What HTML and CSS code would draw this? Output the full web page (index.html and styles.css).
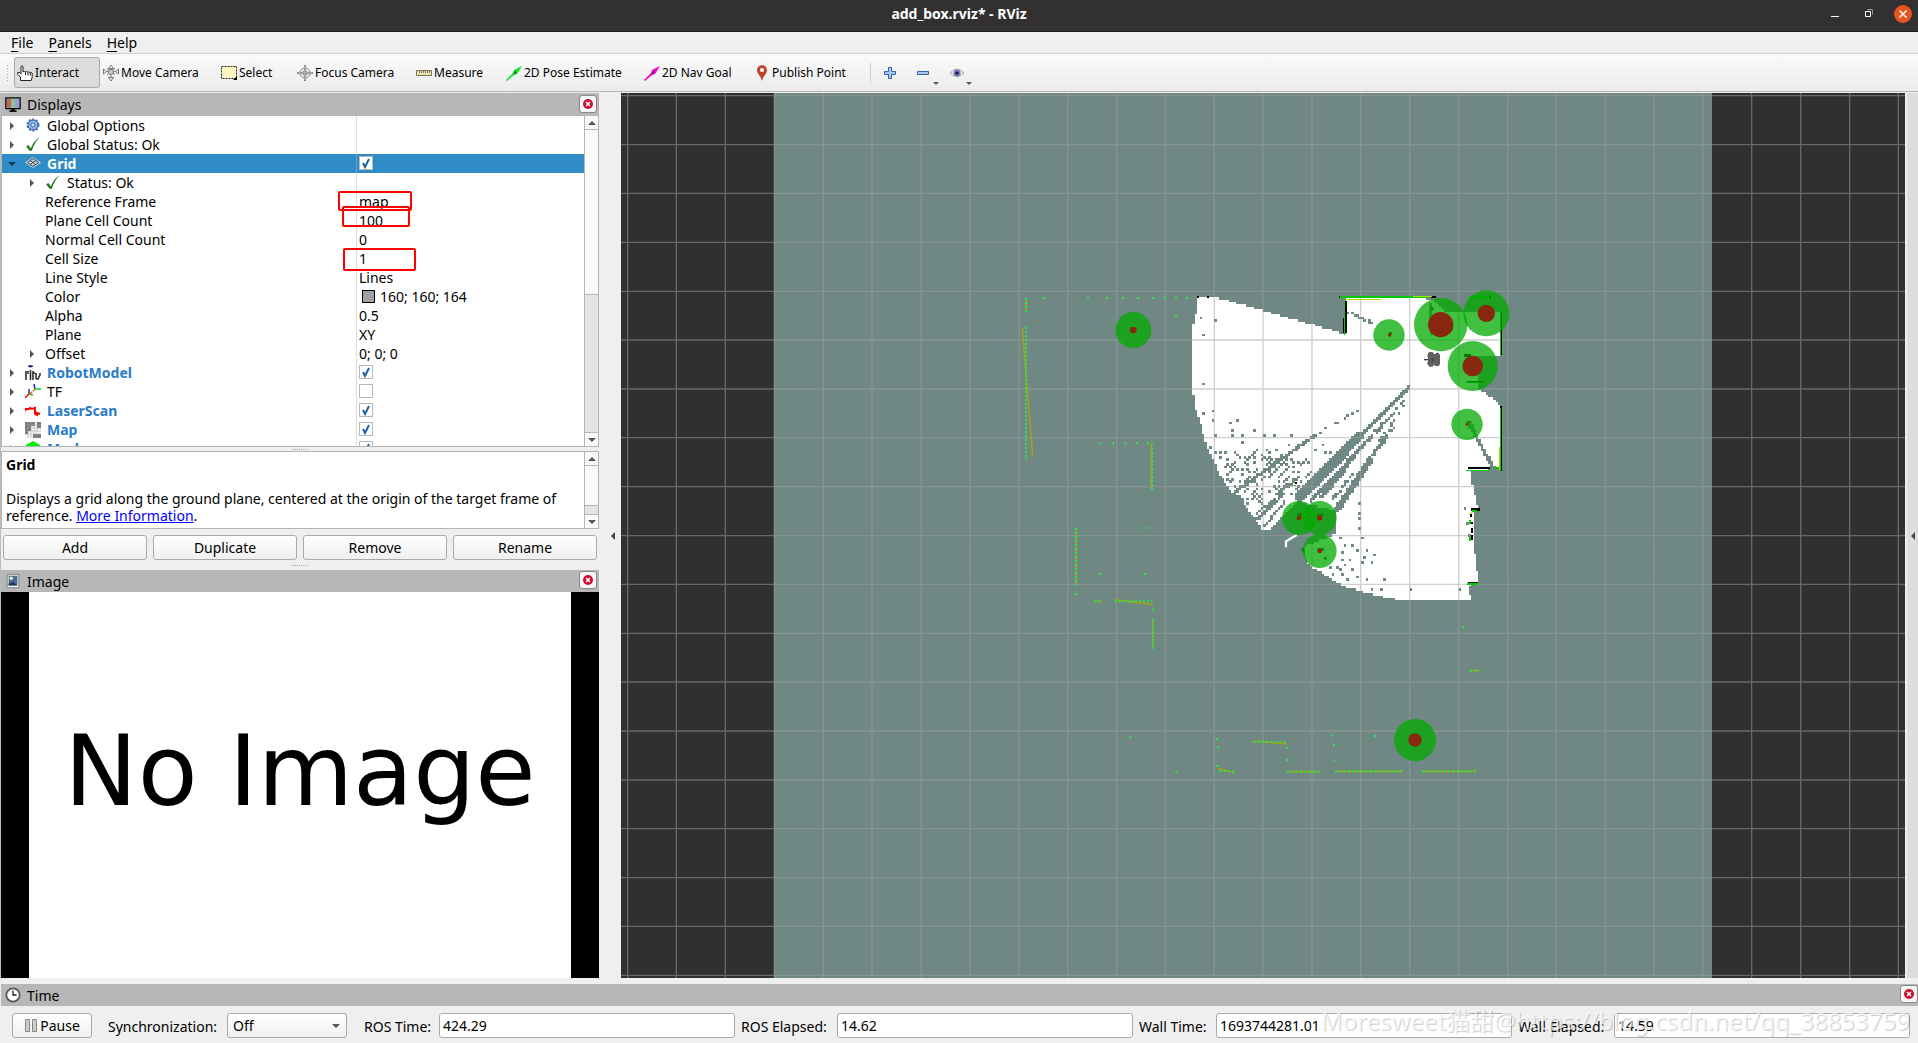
FILE: index.html
```
<!DOCTYPE html>
<html lang="en">
  <head>
    <meta charset="UTF-8" />
    <meta name="viewport" content="width=device-width, initial-scale=1.0" />
    <title>add_box.rviz* - RViz</title>
    <link rel="stylesheet" href="styles.css">
  </head>
  <body>
    <!-- Shared icons -->
    <svg class="defs" width="0" height="0">
      <symbol id="check" viewBox="0 0 14 14">
        <path d="M1 8 L3 7 L5 10 Q8 3 13 0 Q8 5 6 12 L4 12 Z" fill="#1e7a1e" />
      </symbol>
      <symbol id="close" viewBox="0 0 16 16">
        <circle cx="8" cy="8" r="5" fill="#c8102e" />
        <path d="M6 6l4 4M10 6l-4 4" stroke="#fff" stroke-width="1.5" />
      </symbol>
      <symbol id="arrow" viewBox="0 0 16 16">
        <path d="M0 15L7 8l1-3L16 1l-5 8-3 1-7 6z" fill="currentColor" />
        <path d="M9 5l-2 5 4-2z" fill="#333" opacity=".6" />
      </symbol>
    </svg>

    <!-- Title bar -->
    <header class="titlebar">
      <h1>add_box.rviz* - RViz</h1>
      <div class="window-buttons">
        <button aria-label="Minimize"><svg width="18" height="18"><path d="M5 11.500h8" stroke="#fff" /></svg></button>
        <button aria-label="Restore"><svg width="18" height="18" fill="none"><path d="M5.500 6.500h5v5h-5z" stroke="#fff" /><path d="M7.500 4.500h5v5" stroke="#999" /></svg></button>
        <button aria-label="Close" class="quit"><svg width="18" height="18"><path d="M5.500 5.500l7 7M12.500 5.500l-7 7" stroke="#fff" stroke-width="1.500" /></svg></button>
      </div>
    </header>

    <!-- Menu -->
    <nav class="menu">
      <a href="#"><u>F</u>ile</a>
      <a href="#"><u>P</u>anels</a>
      <a href="#"><u>H</u>elp</a>
    </nav>

    <!-- Toolbar -->
    <div class="toolbar">
      <span class="grip"></span>
      <button class="tool interact selected">
        <svg width="16" height="16" viewBox="0 0 16 16"><path d="M3.500 15.500V12L.7 9.500V7.500h2L4 9V1.500q1-1.500 2 0V7q1-1.500 2.500 0 1-1.200 2.500.3 1-1 2.200.3 1-.8 2 .5V11q0 2-1 4.500z" fill="#fff" stroke="#222" /><path d="M8.500 7v3M11 7.500v3M13.300 8v2.500" stroke="#222" /></svg>Interact
      </button>
      <button class="tool move">
        <svg width="16" height="16" viewBox="0 0 16 16" fill="none" stroke="#777"><path d="M8 0L5.500 3.500h5zM8 16l-2.500-3.500h5zM.5 4v5l3-2.500zM15.500 4v5l-3-2.500zM3 6.500h10M8 3v10M4 9.500l8-6M4 3.500l8 6" /><circle cx="8" cy="7" r="2.500" fill="#ccc" /></svg>Move Camera
      </button>
      <button class="tool select">
        <svg width="16" height="16" viewBox="0 0 16 16"><path d="M.5 1.500h15v12H.5z" fill="#fdf6c0" stroke="#222" stroke-dasharray="2 1" /><path d="M16 11v4h-4z" fill="#000" /></svg>Select
      </button>
      <button class="tool focus">
        <svg width="16" height="16" viewBox="0 0 16 16" fill="none" stroke="#888"><circle cx="8" cy="8" r="5" /><circle cx="8" cy="8" r="2.500" /><path d="M8 0v16M0 8h16" stroke-width="2" /><path d="M8 1v14M1 8h14" stroke="#ddd" stroke-width=".6" /></svg>Focus Camera
      </button>
      <button class="tool measure">
        <svg width="16" height="16" viewBox="0 0 16 16"><path d="M.5 5.500h15v5H.5z" fill="#e9dfa5" stroke="#77705a" /><path d="M3.500 6v2M5.500 6v2M7.500 6v2M9.500 6v2M11.500 6v2M13.500 6v2" stroke="#665" stroke-width=".8" /></svg>Measure
      </button>
      <button class="tool pose"><svg width="16" height="16" color="#0cf02a"><use href="#arrow" /></svg>2D Pose Estimate</button>
      <button class="tool nav"><svg width="16" height="16" color="#f800d0"><use href="#arrow" /></svg>2D Nav Goal</button>
      <button class="tool publish">
        <svg width="16" height="16" viewBox="0 0 16 16"><path d="M8 16Q7 12 4 8.500Q2 5 4 2Q8-2 12 2Q14 5 12 8.500Q9 12 8 16z" fill="#b8452c" /><circle cx="8" cy="5" r="2" fill="#fff" /></svg>Publish Point
      </button>
      <span class="separator"></span>
      <button class="mini" aria-label="Add tool"><svg width="14" height="14"><path d="M5.500 1.500h3v4h4v3h-4v4h-3v-4h-4v-3h4z" fill="#a9c7ea" stroke="#2f65aa" /></svg></button>
      <button class="mini drop" aria-label="Remove tool"><svg width="14" height="14"><path d="M1.500 5.500h11v3h-11z" fill="#a9c7ea" stroke="#2f65aa" /></svg></button>
      <button class="mini drop" aria-label="Tool visibility"><svg width="16" height="14"><path d="M1 7Q8-1 15 7Q8 14 1 7z" fill="#e8e8e8" stroke="#aaa" /><circle cx="8" cy="7" r="3.500" fill="#7078c0" /><circle cx="8" cy="7" r="1.500" fill="#112" /></svg></button>
    </div>

    <main class="workspace">
      <aside class="docks">
        <!-- Displays dock -->
        <section class="displays">
          <div class="dock-title">
            <svg width="16" height="16" viewBox="0 0 18 18"><path d="M1 1h16v12H1z" fill="#8c8" stroke="#000" stroke-width="1.500" /><path d="M2 2h5v10H2z" fill="#b66" /><path d="M11 2h5v10h-5z" fill="#99d" /><path d="M7 13h4v2h2v2H5v-2h2z" fill="#111" /></svg>
            <h2>Displays</h2>
            <button class="dock-close" aria-label="Close Displays"><svg width="16" height="16"><use href="#close" /></svg></button>
          </div>
          <div class="scroll-area tree-area">
            <div class="tree">
              <div class="row"><div class="name closed"><svg width="16" height="16" viewBox="0 0 16 16"><circle cx="8" cy="7" r="5" fill="#8fb4e2" stroke="#3a6bb0" /><circle cx="8" cy="7" r="5.500" fill="none" stroke="#3a6bb0" stroke-width="2" stroke-dasharray="2 1.500" /><circle cx="8" cy="7" r="2" fill="#dce8f6" stroke="#3a6bb0" /></svg>Global Options</div><div class="value"></div></div>
              <div class="row"><div class="name closed"><svg width="16" height="16"><use href="#check" /></svg>Global Status: Ok</div><div class="value"></div></div>
              <div class="row current"><div class="name open"><svg width="16" height="16" viewBox="0 0 16 16"><path d="M8 1l8 5.500L8 12 0 6.500z" fill="#c8d8e2" /><path d="M8 2.500l5.500 4L8 10.500 2.500 6.500zM5.200 4.500l5.500 4M10.700 4.500l-5.500 4" fill="none" stroke="#2d4150" /></svg>Grid</div><div class="value"><input type="checkbox" aria-label="Grid" checked></div></div>
              <div class="row child"><div class="name closed"><svg width="16" height="16"><use href="#check" /></svg>Status: Ok</div><div class="value"></div></div>
              <div class="row leaf"><div class="name">Reference Frame</div><div class="value">map</div></div>
              <div class="row leaf"><div class="name">Plane Cell Count</div><div class="value">100</div></div>
              <div class="row leaf"><div class="name">Normal Cell Count</div><div class="value">0</div></div>
              <div class="row leaf"><div class="name">Cell Size</div><div class="value">1</div></div>
              <div class="row leaf"><div class="name">Line Style</div><div class="value">Lines</div></div>
              <div class="row leaf"><div class="name">Color</div><div class="value"><i class="swatch"></i>160; 160; 164</div></div>
              <div class="row leaf"><div class="name">Alpha</div><div class="value">0.5</div></div>
              <div class="row leaf"><div class="name">Plane</div><div class="value">XY</div></div>
              <div class="row leaf"><div class="name closed">Offset</div><div class="value">0; 0; 0</div></div>
              <div class="row enabled"><div class="name closed"><svg width="16" height="16" viewBox="0 0 16 16"><path d="M3 1q2.500-2 5 0v1H3z" fill="#228" /><path d="M4 2h3v1H4z" fill="#bbb" /><path d="M1 6v9M3 6v3M5.500 5v10M8 6v9M8 8h2M11 8v6M11 14h2l2-4V8" fill="none" stroke="#222" stroke-width="1.500" /></svg>RobotModel</div><div class="value"><input type="checkbox" aria-label="RobotModel" checked></div></div>
              <div class="row"><div class="name closed"><svg width="16" height="16" viewBox="0 0 16 16" fill="none" stroke-width="1.500"><path d="M4 10V5M10 5L9 0" stroke="#22c" /><path d="M4 10l4 1M10 5h6" stroke="#0d0" /><path d="M0 14l4-4" stroke="#e00" /><path d="M5 10l5-5" stroke="#d62" stroke-dasharray="3 1" /></svg>TF</div><div class="value"><input type="checkbox" aria-label="TF"></div></div>
              <div class="row enabled"><div class="name closed"><svg width="16" height="16" viewBox="0 0 16 16"><path d="M0 8l1-2h3l1-1 2 1 3-1v6l2 1v-2l3 1" fill="none" stroke="#f00" stroke-width="2" /></svg>LaserScan</div><div class="value"><input type="checkbox" aria-label="LaserScan" checked></div></div>
              <div class="row enabled"><div class="name closed"><svg width="16" height="16" viewBox="0 0 16 16"><path d="M0 0h16v16H0z" fill="#f4f4f4" /><path d="M0 0h10v4H6v5H0zM12 0h4v6h-4zM8 12h8v4H8zM0 9h3v3H0z" fill="#777" /><path d="M3 0v16M6 0v16M9 0v16M12 0v16M0 3h16M0 6h16M0 9h16M0 12h16" stroke="#aaa" stroke-width=".5" /></svg>Map</div><div class="value"><input type="checkbox" aria-label="Map" checked></div></div>
              <div class="row enabled"><div class="name closed"><svg width="16" height="16" viewBox="0 0 16 16"><path d="M8 0l7 4v8l-7 4-7-4V4z" fill="#0e0" /></svg>Marker</div><div class="value"><input type="checkbox" aria-label="Marker" checked></div></div>
            </div>
            <div class="scrollbar"><b class="up"></b><i class="thumb"></i><b class="down"></b></div>
            <!-- Highlighted values -->
            <span class="mark frame"></span>
            <span class="mark count"></span>
            <span class="mark size"></span>
          </div>
          <div class="handle"></div>
          <div class="scroll-area help-area">
            <div class="help">
              <h3>Grid</h3>
              <p>Displays a grid along the ground plane, centered at the origin of the target frame of reference. <a href="#">More Information</a>.</p>
            </div>
            <div class="scrollbar"><b class="up"></b><i class="thumb"></i><b class="down"></b></div>
          </div>
          <div class="actions">
            <button>Add</button>
            <button>Duplicate</button>
            <button>Remove</button>
            <button>Rename</button>
          </div>
          <div class="handle wide"></div>
        </section>

        <!-- Image dock -->
        <section class="image">
          <div class="dock-title">
            <svg width="16" height="16" viewBox="0 0 18 18"><path d="M2.500 1.500h13v15h-13z" fill="#fff" stroke="#777" /><path d="M4 3h10v11H4z" fill="#4d6c98" /><circle cx="7" cy="6" r="2" fill="#eee8b0" /><path d="M4 12l5-2 5 4H4z" fill="#243850" /></svg>
            <h2>Image</h2>
            <button class="dock-close" aria-label="Close Image"><svg width="16" height="16"><use href="#close" /></svg></button>
          </div>
          <div class="camera"><p>No Image</p></div>
        </section>
      </aside>

      <div class="collapse left"><button aria-label="Hide left docks"></button></div>

      <!-- 3D view -->
      <svg class="view" viewBox="0 0 3852 2655" preserveAspectRatio="xMidYMid slice">
        <path d="M0 0h3852v2655H0z" fill="#303030" />
        <path d="M459 0h2814v2655H459z" fill="#6f8884" />
        <g transform="translate(1677 561)" shape-rendering="crispEdges">
          <path id="free" fill="#fff" />
          <path id="unknown" fill="#6f8884" />
        </g>
        <!-- Grid -->
        <path stroke="#a0a0a4" stroke-opacity=".5" stroke-width="4" d="M20 0v2655M166 0v2655M313 0v2655M460 0v2655M607 0v2655M753 0v2655M900 0v2655M1047 0v2655M1194 0v2655M1340 0v2655M1487 0v2655M1633 0v2655M1780 0v2655M1926 0v2655M2073 0v2655M2219 0v2655M2366 0v2655M2513 0v2655M2660 0v2655M2806 0v2655M2953 0v2655M3099 0v2655M3246 0v2655M3392 0v2655M3539 0v2655M3686 0v2655M3832 0v2655M0 8h3852M0 155h3852M0 301h3852M0 448h3852M0 595h3852M0 741h3852M0 888h3852M0 1034h3852M0 1181h3852M0 1328h3852M0 1474h3852M0 1621h3852M0 1767h3852M0 1914h3852M0 2061h3852M0 2207h3852M0 2354h3852M0 2500h3852M0 2647h3852" />

        <!-- Walls, scan hits and obstacles around the robot -->
        <g transform="translate(1677 561)" fill="none">
          <g shape-rendering="crispEdges">
            <path stroke="#000" stroke-width="7" d="M50 51h8M80 51h8M476 50h292M498 62v98M491 115v45M768 146h50M868 50h66M962 95v130M963 378v196M863 564h68M945 564h18M872 688h28M876 744v14M876 766v14M872 702v8M876 725v6M864 909h30M344 609h7M852 226h20M860 306h52" />
            <path stroke="#6f8884" stroke-width="8" d="M738 56h16M752 70v70" />
            <path stroke="#0c0" stroke-width="4" d="M480 51h260M494 64v20M494 100v64M868 51h60M961 98v126M961 385v188M858 571h72M945 564h18M876 693h16M870 720v12M870 770v12M862 912h32M750 162h10M342 616h6M858 308h56M18 53h6" />
            <path stroke="#ad0" stroke-width="3" d="M494 57h110M700 50h56M957 500v70M868 702l10-6" />
          </g>
          <path stroke="#fff" stroke-width="7" d="M350 765L318 784V802" />
          <g fill="#00aa00" fill-opacity=".75">
            <circle cx="627" cy="165" r="47" /><circle cx="782" cy="134" r="80" />
            <circle cx="919" cy="100" r="69" /><circle cx="878" cy="258" r="75" />
            <circle cx="861" cy="433" r="47" /><circle cx="357" cy="714" r="51" />
            <circle cx="419" cy="714" r="51" /><circle cx="419" cy="813" r="51" />
          </g>
          <path stroke="#087c08" stroke-width="8" stroke-opacity=".8" d="M860 427h14M352 703h14M410 705h20M412 808h20M432 835h8M626 160h10M757 82v10M865 228v40M368 804v10" />
          <g fill="#8a270f">
            <circle cx="629" cy="165" r="5" /><circle cx="782" cy="134" r="38" />
            <circle cx="919" cy="100" r="26" /><circle cx="878" cy="258" r="31" />
            <circle cx="861" cy="433" r="4" /><circle cx="357" cy="714" r="7" />
            <circle cx="419" cy="714" r="8" /><circle cx="419" cy="813" r="7" />
          </g>
          <path fill="#606060" d="M744 220l4-4h10l4 6h4l4-4h6l4 8v26l-4 6h-10l-4-4-4 6h-10l-6-8v-6h2v-14h-2z" />
          <path stroke="#2b3f70" stroke-width="4" d="M732 239h12" />
          <circle cx="758" cy="239" r="5" fill="#444" />
        </g>

        <!-- Scan west of the free space -->
        <g transform="translate(1137 561)" fill="none">
          <path stroke="#a3a01e" stroke-width="5" d="M78 56v38M67 144L98 530M454 490v134M228 746v166M284 964h20M346 959L458 974M459 1020v82" />
          <path stroke="#2be54a" stroke-width="6" stroke-dasharray="6 6" d="M78 54v44M78 140v400M456 492v142M228 744v172M459 1018v88M284 964h24M344 964h114" />
          <path stroke="#2be54a" stroke-width="6" d="M129 54h6M261 54h6M318 54h6M366 54h6M411 54h6M456 54h6M492 54h6M525 54h6M558 54h6M525 108h6M296 490h6M336 490h6M373 490h6M408 489h6M441 490h6M437 744h6M297 882h6M432 882h6M225 942h6M456 989h6" />
          <circle cx="400" cy="150" r="54" fill="#00aa00" fill-opacity=".75" /><circle cx="400" cy="150" r="10" fill="#8a270f" />
        </g>

        <!-- Scan south of the free space -->
        <g transform="translate(1377 1461)" fill="none">
          <path stroke="#a3a01e" stroke-width="5" d="M522 483L621 492M412 565L464 578M621 575h96M766 574h202M1027 574h162M1172 272h24" />
          <path stroke="#2be54a" stroke-width="6" stroke-dasharray="6 7" d="M519 486h100M621 575h98M765 574h204M1026 574h164M1170 272h28M418 574h48" />
          <path stroke="#2be54a" stroke-width="6" d="M148 472h6M408 477h6M411 501h6M409 558h6M286 576h6M618 504h6M618 540h6M754 467h6M759 495h6M759 541h6M882 468h6M1147 141h6" />
          <circle cx="1005" cy="480" r="63" fill="#00aa00" fill-opacity=".75" /><circle cx="1005" cy="480" r="20" fill="#8a270f" />
        </g>
      </svg>

      <div class="collapse right"><button aria-label="Hide right docks"></button></div>
    </main>

    <!-- Time dock -->
    <footer class="time">
      <div class="dock-title">
        <svg width="16" height="16" viewBox="0 0 18 18"><circle cx="9" cy="9" r="7.500" fill="#fff" stroke="#555" stroke-width="2" /><path d="M9 4v5h4" fill="none" stroke="#222" stroke-width="1.500" /></svg>
        <h2>Time</h2>
        <button class="dock-close" aria-label="Close Time"><svg width="16" height="16"><use href="#close" /></svg></button>
      </div>
      <form class="clock">
        <button type="button" class="pause"><svg width="14" height="16"><path d="M1.500 1.500h4v12h-4zM8.500 1.500h4v12h-4z" fill="#ccc" stroke="#888" /></svg>Pause</button>
        <label for="sync" class="sync">Synchronization:</label>
        <select id="sync"><option>Off</option></select>
        <label for="rosTime" class="ros-time">ROS Time:</label>
        <input id="rosTime" type="text" value="424.29">
        <label for="rosElapsed" class="elapsed">ROS Elapsed:</label>
        <input id="rosElapsed" type="text" value="14.62">
        <label for="wallTime" class="wall-time">Wall Time:</label>
        <input id="wallTime" type="text" value="1693744281.01">
        <label for="wallElapsed" class="elapsed">Wall Elapsed:</label>
        <input id="wallElapsed" type="text" value="14.59">
      </form>
      <span class="watermark">Moresweet猫甜@https://blog.csdn.net/qq_38853759</span>
    </footer>

    <script src="map.js"></script>
  </body>
</html>
```
FILE: styles.css
```
/* General */
* {
  box-sizing: border-box;
}

body {
  margin: 0;
  height: 100vh;
  display: flex;
  flex-direction: column;
  overflow: hidden;
  background: #efefef;
  color: #000;
  font-family: "Noto Sans", "Noto Sans CJK SC", sans-serif;
  font-size: 14px;
}

button,
input,
select {
  font: inherit;
  color: inherit;
}

h1,
h2,
h3,
p {
  margin: 0;
  font-size: 14px;
  font-weight: normal;
}

svg {
  flex: none;
}

.defs {
  position: absolute;
}

/* Title bar */
.titlebar {
  display: grid;
  grid-template-columns: 1fr auto 1fr;
  align-items: center;
  height: 32px;
  padding-bottom: 4px;
  background: #323031;
  border-bottom: 1px solid #1c1c1c;
  color: #fff;
}

.titlebar h1 {
  grid-column: 2;
  font-weight: bold;
}

.window-buttons {
  display: flex;
  justify-content: flex-end;
  gap: 16px;
  padding-right: 6px;
}

.window-buttons button {
  width: 18px;
  height: 18px;
  padding: 0;
  border: none;
  border-radius: 50%;
  background: none;
}

.window-buttons .quit {
  background: #e95420;
}

.window-buttons svg {
  display: block;
}

/* Menu */
.menu {
  display: flex;
  gap: 15px;
  height: 22px;
  padding-left: 11px;
  line-height: 22px;
  border-bottom: 1px solid #d0d0d0;
}

.menu a {
  color: #000;
  text-decoration: none;
}

.menu u {
  text-underline-offset: 3px;
}

/* Toolbar */
.toolbar {
  display: flex;
  align-items: center;
  height: 38px;
  padding-left: 6px;
  background: linear-gradient(#fafafa, #ececec);
  border-bottom: 1px solid #b4b4b4;
  font-size: 12px;
}

.grip {
  width: 4px;
  height: 18px;
  margin-right: 4px;
  background: radial-gradient(#aaa 1px, transparent 1px) 0 0 / 3px 3px;
}

.tool {
  display: flex;
  align-items: center;
  gap: 2px;
  height: 31px;
  padding: 0 0 0 2px;
  border: 1px solid transparent;
  border-radius: 3px;
  background: none;
  white-space: nowrap;
}

.tool.selected {
  background: #dcdcdc;
  border-color: #aaa;
}

.interact { width: 86px; }
.move { width: 118px; }
.select { width: 76px; }
.focus { width: 119px; }
.measure { width: 90px; }
.pose { width: 138px; }
.nav { width: 110px; }
.publish { width: 119px; }

.separator {
  width: 1px;
  height: 20px;
  margin-right: 6px;
  background: #ccc;
}

.mini {
  position: relative;
  width: 33px;
  height: 31px;
  padding: 0 0 0 6px;
  border: none;
  background: none;
  text-align: left;
}

.mini svg {
  display: block;
}

.drop::after {
  content: "";
  position: absolute;
  right: 4px;
  bottom: 3px;
  border: 3px solid transparent;
  border-top-color: #555;
  border-bottom: none;
}

/* Docks */
.workspace {
  flex: 1;
  display: flex;
  min-height: 0;
  padding-top: 1px;
}

.docks {
  display: flex;
  flex-direction: column;
  width: 599px;
  padding-left: 1px;
  background: linear-gradient(90deg, #bbb 1px, transparent 1px);
}

.dock-title {
  display: flex;
  align-items: center;
  gap: 6px;
  height: 23px;
  padding: 0 2px 0 4px;
  background: #b7b7b7;
}

.dock-title h2 {
  flex: 1;
}

.dock-close {
  width: 18px;
  height: 18px;
  margin-bottom: 2px;
  padding: 0;
  border: 1px solid #888;
  border-radius: 3px;
  background: #f6f6f6;
}

.dock-close svg {
  display: block;
}

.scroll-area {
  position: relative;
  display: flex;
  background: #fff;
  border: 1px solid #b4b4b4;
}

.tree-area {
  height: 331px;
  border-top: none;
}

.tree {
  flex: 1;
  overflow: hidden;
}

.row {
  display: grid;
  grid-template-columns: 354px 1fr;
  height: 19px;
  line-height: 19px;
}

.name {
  position: relative;
  display: flex;
  align-items: center;
  gap: 6px;
  padding-left: 23px;
}

.child .name,
.leaf .name {
  padding-left: 43px;
}

.value {
  display: flex;
  align-items: center;
  padding-left: 2px;
  border-left: 1px solid #ddd;
}

.closed::before,
.open::before {
  content: "";
  position: absolute;
  left: 8px;
  top: 6px;
  border: 4px solid transparent;
  border-left-color: #555;
  border-right: none;
}

.child .closed::before,
.leaf .closed::before {
  left: 28px;
}

.open::before {
  left: 6px;
  top: 8px;
  border: 4px solid transparent;
  border-top-color: #123a58;
  border-bottom: none;
}

.current {
  background: #308cc6;
  color: #fff;
  font-weight: bold;
}

.current .value {
  border-color: #5aa3d2;
}

.enabled .name {
  color: #2a7bc8;
  font-weight: bold;
}

input[type="checkbox"] {
  appearance: none;
  width: 14px;
  height: 14px;
  margin: 0 0 1px;
  background: #fff center no-repeat;
  border: 1px solid #b8b8b8;
}

input[type="checkbox"]:checked {
  background-image: url("data:image/svg+xml,%3Csvg xmlns='http://www.w3.org/2000/svg' width='12' height='12'%3E%3Cpath d='M3 6l2 4 4-8' fill='none' stroke='%231f62a5' stroke-width='2'/%3E%3C/svg%3E");
}

.swatch {
  width: 13px;
  height: 13px;
  margin: 0 5px 0 3px;
  background: #a0a0a4;
  border: 1px solid #000;
}

.scrollbar {
  display: flex;
  flex-direction: column;
  width: 14px;
  background: #e4e4e4;
  border-left: 1px solid #b4b4b4;
}

.scrollbar b {
  display: grid;
  place-items: center;
  height: 14px;
  background: #fafafa;
}

.scrollbar b::before {
  content: "";
  border: 4px solid transparent;
}

.scrollbar .up {
  border-bottom: 1px solid #b4b4b4;
}

.scrollbar .up::before {
  border-bottom-color: #555;
  border-top: none;
}

.scrollbar .down {
  margin-top: auto;
  border-top: 1px solid #b4b4b4;
}

.scrollbar .down::before {
  border-top-color: #555;
  border-bottom: none;
}

.thumb {
  height: 50%;
  background: #fafafa;
  border-bottom: 1px solid #b4b4b4;
}

/* Red frames over the edited values */
.mark {
  position: absolute;
  border: 2px solid #f00;
  border-radius: 2px;
}

.frame {
  left: 336px;
  top: 75px;
  width: 74px;
  height: 20px;
}

.count {
  left: 340px;
  top: 90px;
  width: 68px;
  height: 21px;
}

.size {
  left: 341px;
  top: 132px;
  width: 73px;
  height: 23px;
}

.handle {
  display: flex;
  align-items: center;
  justify-content: center;
  height: 4px;
}

.handle::before {
  content: "";
  width: 16px;
  border-top: 1px dotted #aaa;
}

.wide {
  height: 10px;
}

.help-area {
  height: 78px;
}

.help-area .thumb {
  height: 52%;
}

.help {
  flex: 1;
  padding: 4px 2px 0 4px;
  line-height: 17px;
}

.help h3 {
  margin-bottom: 17px;
  font-weight: bold;
}

.help a {
  color: #00f;
}

.actions {
  display: grid;
  grid-template-columns: repeat(4, 1fr);
  gap: 6px;
  padding: 6px 2px 0;
}

.actions button,
.pause,
select {
  height: 25px;
  padding: 0;
  border: 1px solid #aaa;
  border-radius: 3px;
  background: linear-gradient(#fefefe, #f0f0f0);
}

.image {
  flex: 1;
  display: flex;
  flex-direction: column;
  min-height: 0;
}

.image .dock-title,
.time .dock-title {
  height: 22px;
}

.camera {
  flex: 1;
  display: grid;
  place-items: center;
  padding-bottom: 28px;
  background: #fff;
  border: solid #000;
  border-width: 0 28px;
}

.camera p {
  font-family: "DejaVu Sans", sans-serif;
  font-size: 98px;
  line-height: 110px;
}

.collapse {
  display: flex;
  align-items: center;
  justify-content: flex-end;
  width: 22px;
}

.collapse button {
  width: 4px;
  height: 8px;
  padding: 0;
  border: 4px solid transparent;
  border-right-color: #444;
  border-left: none;
  background: none;
}

.left {
  padding-right: 6px;
}

.right {
  width: 13px;
  padding-right: 3px;
  background: #ddd;
  border-left: 2px solid #efefef;
}

.view {
  flex: 1;
  min-width: 0;
  height: 100%;
}

/* Time dock */
.time {
  position: relative;
  margin-top: 6px;
  padding-left: 1px;
}

.time .dock-title {
  padding-right: 0;
}

.clock {
  display: flex;
  align-items: center;
  height: 37px;
  padding: 2px 8px 0 11px;
}

.clock label {
  padding-top: 2px;
}

.pause {
  display: flex;
  align-items: center;
  justify-content: center;
  gap: 2px;
  width: 80px;
  margin-right: 16px;
}

.sync {
  width: 119px;
}

.ros-time {
  width: 75px;
}

.clock .wall-time {
  width: 83px;
  padding-left: 6px;
}

.clock .elapsed {
  width: 102px;
  padding-left: 6px;
}

select {
  appearance: none;
  width: 120px;
  margin-right: 17px;
  padding-left: 5px;
  background: url("data:image/svg+xml,%3Csvg xmlns='http://www.w3.org/2000/svg' width='8' height='4'%3E%3Cpath d='M0 0h8l-4 4z' fill='%23555'/%3E%3C/svg%3E") right 6px center no-repeat, linear-gradient(#fefefe, #f0f0f0);
}

.clock input {
  flex: 1;
  min-width: 0;
  height: 25px;
  padding: 0 3px;
  border: 1px solid #aaa;
  border-radius: 3px;
  background: #fff;
}

.watermark {
  position: absolute;
  right: 8px;
  bottom: 6px;
  color: rgba(255, 255, 255, 0.7);
  font-size: 24px;
  line-height: 32px;
  text-shadow: 1px 1px 1px rgba(0, 0, 0, 0.2);
  pointer-events: none;
  white-space: nowrap;
}
```
FILE: map.js
```
// Occupancy map: one cell is 22/3 units wide
const CELL = 22 / 3;

// Outline of the free space
const outline = [
  [52, 48], [96, 48], [480, 158], [497, 158], [497, 50], [740, 50], [760, 60],
  [800, 96], [962, 96], [962, 225], [890, 225], [895, 328], [962, 374],
  [962, 566], [872, 572], [878, 630], [895, 684], [878, 700], [880, 800],
  [892, 880], [892, 910], [864, 914], [866, 935], [873, 957], [845, 960],
  [690, 962], [630, 955], [570, 940], [500, 920], [460, 900], [410, 868],
  [380, 850], [372, 800], [470, 760], [470, 690], [350, 665], [262, 752],
  [246, 745], [230, 722], [170, 640], [155, 634], [130, 600], [115, 575],
  [103, 545], [85, 510], [72, 470], [60, 425], [50, 400], [43, 370],
  [37, 310], [37, 160], [43, 108], [52, 100],
];

// Part of the fan where the scan is sparse
const sparse = [
  [85, 490], [150, 515], [300, 505], [395, 545], [345, 605], [235, 712],
  [165, 640],
];

// Unseen rays: x1, y1, x2, y2, width, density
const rays = [
  [685, 320, 540, 465, 10, 1],
  [540, 465, 495, 510, 22, 1],
  [510, 495, 360, 650, 30, 1],
  [670, 365, 560, 490, 7, 0.6],
  [610, 425, 500, 555, 8, 0.8],
  [545, 500, 390, 665, 9, 1],
  [500, 560, 425, 650, 14, 1],
  [670, 380, 600, 480, 7, 0.6],
  [640, 440, 560, 550, 12, 0.8],
  [570, 540, 470, 690, 18, 1],
  [520, 580, 450, 665, 8, 0.7],
  [540, 388, 405, 465, 7, 0.35],
  [405, 465, 165, 636, 10, 1],
  [345, 600, 232, 715, 11, 0.9],
  [395, 570, 255, 735, 6, 0.7],
  [870, 435, 940, 565, 10, 1],
  [500, 95, 585, 132, 7, 0.7],
];

// Single unseen cells
const dots = [
  [62, 111], [105, 118], [69, 162], [69, 309], [98, 390], [69, 396],
  [171, 418], [150, 426], [98, 420], [222, 454], [252, 462], [282, 462],
  [333, 462], [186, 463], [106, 469], [157, 469], [158, 448], [186, 485],
  [325, 492], [406, 513], [435, 520], [449, 520], [428, 492], [538, 668],
  [538, 703], [538, 718], [538, 747], [545, 776], [479, 777], [494, 792],
  [516, 799], [530, 813], [560, 813], [486, 816], [582, 828], [553, 835],
  [574, 850], [545, 850], [486, 843], [508, 843], [494, 857], [516, 872],
  [479, 872], [457, 880], [530, 894], [501, 901], [560, 901], [611, 901],
  [486, 885], [472, 858], [450, 862], [575, 931], [604, 931], [692, 931],
  [838, 931], [853, 688], [861, 726], [867, 766],
];

function inside(x, y, shape) {
  let hit = false;
  for (let i = 0, j = shape.length - 1; i < shape.length; j = i++) {
    const [xi, yi] = shape[i];
    const [xj, yj] = shape[j];
    if (yi > y !== yj > y && x < ((xj - xi) * (y - yi)) / (yj - yi) + xi) {
      hit = !hit;
    }
  }
  return hit;
}

function distance(x, y, [x1, y1, x2, y2]) {
  const dx = x2 - x1;
  const dy = y2 - y1;
  let t = ((x - x1) * dx + (y - y1) * dy) / (dx * dx + dy * dy);
  t = Math.max(0, Math.min(1, t));
  return Math.hypot(x - x1 - t * dx, y - y1 - t * dy);
}

// Repeatable noise from 0 to 1
function noise(c, r) {
  const n = Math.sin(c * 127 + r * 311) * 43758;
  return n - Math.floor(n);
}

function cellPath(c, r) {
  return `M${Math.round(c * CELL)} ${Math.round(r * CELL)}h8v8h-8z`;
}

let free = "";
let unknown = "";
for (let r = 6; r < 132; r++) {
  for (let c = 4; c < 134; c++) {
    const x = (c + 0.5) * CELL;
    const y = (r + 0.5) * CELL;
    if (!inside(x, y, outline)) continue;
    free += cellPath(c, r);
    const onRay = rays.some(
      (ray) => distance(x, y, ray) < ray[4] / 2 && noise(c, r) < ray[5]
    );
    const speckle =
      inside(x, y, sparse) && (c + r) % 2 === 0 && noise(c, r) < 0.4;
    if (onRay || speckle) unknown += cellPath(c, r);
  }
}
for (const [x, y] of dots) {
  unknown += cellPath(Math.floor(x / CELL), Math.floor(y / CELL));
}

document.getElementById("free").setAttribute("d", free);
document.getElementById("unknown").setAttribute("d", unknown);
```
